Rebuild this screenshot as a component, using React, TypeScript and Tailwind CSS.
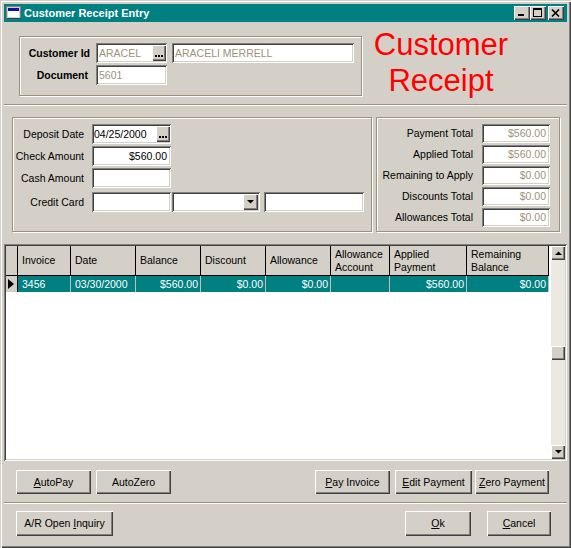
import React from "react";

const SUNKEN =
  "bg-white shadow-[inset_1px_1px_0_#808080,inset_-1px_-1px_0_#ffffff,inset_2px_2px_0_#404040,inset_-2px_-2px_0_#d4d0c8]";
const RAISED =
  "bg-[#d4d0c8] shadow-[inset_1px_1px_0_#ffffff,inset_-1px_-1px_0_#404040,inset_-2px_-2px_0_#808080]";
const GROUP = "border border-[#a0927a] shadow-[inset_1px_1px_0_#ffffff,1px_1px_0_#ffffff]";

function DownTri() {
  return (
    <svg width="7" height="4" viewBox="0 0 7 4">
      <polygon points="0,0 7,0 3.5,3.5" fill="black" />
    </svg>
  );
}
function UpTri() {
  return (
    <svg width="7" height="4" viewBox="0 0 7 4">
      <polygon points="0,4 7,4 3.5,0.5" fill="black" />
    </svg>
  );
}

function Dots() {
  return (
    <div className={`${RAISED} w-[14px] h-[16px] flex items-end justify-center pb-[4px] gap-[1px] shrink-0`}>
      <div className="w-[2px] h-[2px] bg-black" />
      <div className="w-[2px] h-[2px] bg-black" />
      <div className="w-[2px] h-[2px] bg-black" />
    </div>
  );
}

function WinIcon() {
  return (
    <svg width="16" height="14" viewBox="0 0 16 14">
      <rect x="0.5" y="0.5" width="14" height="12" fill="#d4d0c8" stroke="#808080" />
      <rect x="2" y="2" width="11" height="9" fill="#ffffff" />
      <rect x="2" y="2" width="11" height="3" fill="#1010a8" />
      <line x1="1" y1="12.5" x2="15" y2="12.5" stroke="#404040" />
    </svg>
  );
}

function TitleBtn({ kind }: { kind: "min" | "max" | "close" }) {
  return (
    <div className={`${RAISED} w-[16px] h-[14px] relative`}>
      {kind === "min" && <div className="absolute left-[4px] top-[8px] w-[6px] h-[2px] bg-black" />}
      {kind === "max" && (
        <div className="absolute left-[3px] top-[2px] w-[9px] h-[9px] border border-black border-t-2" />
      )}
      {kind === "close" && (
        <svg className="absolute left-[3px] top-[3px]" width="9" height="8" viewBox="0 0 9 8">
          <path d="M1 0.5 L8 7.5 M8 0.5 L1 7.5" stroke="black" strokeWidth="1.6" />
        </svg>
      )}
    </div>
  );
}

function Btn({ w, children }: { w: string; children: React.ReactNode }) {
  return (
    <div className={`${RAISED} ${w} h-full flex items-center justify-center`}>
      <span className="whitespace-pre">{children}</span>
    </div>
  );
}

const cols = [
  { w: "w-[53px]", h: ["Invoice"], v: "3456", r: false },
  { w: "w-[65px]", h: ["Date"], v: "03/30/2000", r: false },
  { w: "w-[65px]", h: ["Balance"], v: "$560.00", r: true },
  { w: "w-[65px]", h: ["Discount"], v: "$0.00", r: true },
  { w: "w-[65px]", h: ["Allowance"], v: "$0.00", r: true },
  { w: "w-[59px]", h: ["Allowance", "Account"], v: "", r: true },
  { w: "w-[77px]", h: ["Applied", "Payment"], v: "$560.00", r: true },
  { w: "w-[82px]", h: ["Remaining", "Balance"], v: "$0.00", r: true },
];

export default function App() {
  return (
    <div className="w-[571px] h-[548px] bg-[#d4d0c8] font-['Liberation_Sans',Arial,sans-serif] text-[10.5px] leading-none text-black overflow-hidden flex flex-col p-[4px] shadow-[inset_1px_1px_0_#d4d0c8,inset_2px_2px_0_#ffffff,inset_-1px_-1px_0_#404040,inset_-2px_-2px_0_#808080]">
      {/* title bar */}
      <div className="h-[18px] bg-[#008080] flex items-center pl-[2px] pr-[3px] shrink-0">
        <WinIcon />
        <span className="ml-[2px] text-white font-bold text-[11px]">Customer Receipt Entry</span>
        <div className="ml-auto flex items-center">
          <TitleBtn kind="min" />
          <TitleBtn kind="max" />
          <div className="w-[2px]" />
          <TitleBtn kind="close" />
        </div>
      </div>

      {/* client */}
      <div className="flex-1 flex flex-col">
        {/* header section */}
        <div className="h-[82px] flex items-start shrink-0">
          <div className={`${GROUP} ml-[15px] mt-[14px] w-[343px] h-[60px] flex flex-col pt-[6px]`}>
            <div className="flex items-center h-[20px]">
              <div className="w-[70px] text-right font-bold">Customer Id</div>
              <div className={`${SUNKEN} ml-[6px] w-[71px] h-[20px] flex items-center pl-[3px] pr-[1px]`}>
                <span className="flex-1 text-[#a0927a]">ARACEL</span>
                <Dots />
              </div>
              <div className={`${SUNKEN} ml-[5px] w-[182px] h-[20px] flex items-center pl-[3px] text-[#a0927a]`}>
                ARACELI MERRELL
              </div>
            </div>
            <div className="flex items-center h-[20px] mt-[2px]">
              <div className="w-[68px] text-right font-bold">Document</div>
              <div className={`${SUNKEN} ml-[8px] w-[71px] h-[20px] flex items-center pl-[3px] text-[#a0927a]`}>
                5601
              </div>
            </div>
          </div>
          <div className="ml-[9px] mt-[5px] w-[140px] text-center text-[31px] leading-[36px] text-[#ff0000]">
            Customer
            <br />
            Receipt
          </div>
        </div>
        <div className="h-[2px] border-t border-t-[#a0927a] border-b border-b-white shrink-0" />

        {/* middle section */}
        <div className="flex mt-[11px] h-[115px] shrink-0">
          <div className={`${GROUP} ml-[8px] w-[360px] h-full flex flex-col pt-[6px]`}>
            <div className="flex items-center h-[20px]">
              <div className="w-[71px] text-right">Deposit Date</div>
              <div className={`${SUNKEN} ml-[8px] w-[79px] h-[20px] flex items-center pl-[2px] pr-[1px]`}>
                <span className="flex-1">04/25/2000</span>
                <Dots />
              </div>
            </div>
            <div className="flex items-center h-[20px] mt-[2px]">
              <div className="w-[71px] text-right">Check Amount</div>
              <div className={`${SUNKEN} ml-[8px] w-[79px] h-[20px] flex items-center justify-end pr-[4px]`}>
                $560.00
              </div>
            </div>
            <div className="flex items-center h-[20px] mt-[2px]">
              <div className="w-[71px] text-right">Cash Amount</div>
              <div className={`${SUNKEN} ml-[8px] w-[79px] h-[20px]`} />
            </div>
            <div className="flex items-center h-[20px] mt-[4px]">
              <div className="w-[71px] text-right">Credit Card</div>
              <div className={`${SUNKEN} ml-[8px] w-[79px] h-[20px]`} />
              <div className={`${SUNKEN} ml-[1px] w-[88px] h-[20px] flex items-center justify-end pr-[2px]`}>
                <div className={`${RAISED} w-[15px] h-[16px] flex items-center justify-center`}>
                  <DownTri />
                </div>
              </div>
              <div className={`${SUNKEN} ml-[4px] w-[100px] h-[20px]`} />
            </div>
          </div>

          <div className={`${GROUP} ml-[4px] w-[184px] h-full flex flex-col pt-[6px]`}>
            {[
              ["Payment Total", "$560.00"],
              ["Applied Total", "$560.00"],
              ["Remaining to Apply", "$0.00"],
              ["Discounts Total", "$0.00"],
              ["Allowances Total", "$0.00"],
            ].map(([l, v], i) => (
              <div key={l} className={`flex items-center h-[19px] ${i > 0 ? "mt-[2px]" : ""}`}>
                <div className="w-[96px] text-right">{l}</div>
                <div
                  className={`${SUNKEN} ml-[9px] w-[68px] h-[19px] flex items-center justify-end pr-[4px] text-[#a0927a]`}
                >
                  {v}
                </div>
              </div>
            ))}
          </div>
        </div>

        {/* grid */}
        <div className={`${SUNKEN} mt-[12px] w-[563px] h-[217px] p-[2px] flex shrink-0`}>
          <div className="w-[543px] flex flex-col">
            <div className="h-[30px] flex bg-[#d4d0c8] border-b border-black">
              <div className="w-[12px] border-r border-black" />
              {cols.map((c, i) => (
                <div
                  key={i}
                  className={`${c.w} border-r border-black flex flex-col justify-center pl-[4px] leading-[13px]`}
                >
                  {c.h.map((t) => (
                    <span key={t}>{t}</span>
                  ))}
                </div>
              ))}
            </div>
            <div className="h-[16px] flex">
              <div className="w-[12px] bg-[#d4d0c8] border-r border-black flex items-center pl-[2px]">
                <svg width="6" height="10" viewBox="0 0 6 10">
                  <polygon points="0,0 6,5 0,10" fill="black" />
                </svg>
              </div>
              {cols.map((c, i) => (
                <div
                  key={i}
                  className={`${c.w} bg-[#008080] text-white border-r border-[#c0c0c0] flex items-center ${
                    c.r ? "justify-end pr-[2px]" : "pl-[4px]"
                  }`}
                >
                  {c.v}
                </div>
              ))}
            </div>
          </div>
          <div className="flex-1" />
          <div className="w-[14px] flex flex-col bg-[#ece9e3]">
            <div className={`${RAISED} h-[14px] flex items-center justify-center`}>
              <UpTri />
            </div>
            <div className="flex-1 relative">
              <div className={`${RAISED} absolute left-0 top-[86px] w-[14px] h-[14px]`} />
            </div>
            <div className={`${RAISED} h-[14px] flex items-center justify-center`}>
              <DownTri />
            </div>
          </div>
        </div>

        {/* action buttons */}
        <div className="flex mt-[9px] h-[24px] shrink-0">
          <div className="ml-[12px]" />
          <Btn w="w-[75px]">
            <span className="underline">A</span>utoPay
          </Btn>
          <div className="ml-[5px]" />
          <Btn w="w-[75px]">AutoZero</Btn>
          <div className="ml-auto" />
          <Btn w="w-[75px]">
            <span className="underline">P</span>ay Invoice
          </Btn>
          <div className="ml-[5px]" />
          <Btn w="w-[77px]">
            <span className="underline">E</span>dit Payment
          </Btn>
          <div className="ml-[3px]" />
          <Btn w="w-[74px]">
            <span className="underline">Z</span>ero Payment
          </Btn>
          <div className="mr-[18px]" />
        </div>
        <div className="mt-[8px] h-[2px] border-t border-t-[#a0927a] border-b border-b-white shrink-0" />

        <div className="flex mt-[7px] h-[25px] shrink-0">
          <div className="ml-[12px]" />
          <Btn w="w-[97px]">
            {"A/R Open "}
            <span className="underline">I</span>nquiry
          </Btn>
          <div className="ml-auto" />
          <Btn w="w-[66px]">
            <span className="underline">O</span>k
          </Btn>
          <div className="ml-[16px]" />
          <Btn w="w-[64px]">
            <span className="underline">C</span>ancel
          </Btn>
          <div className="mr-[16px]" />
        </div>
      </div>
    </div>
  );
}
